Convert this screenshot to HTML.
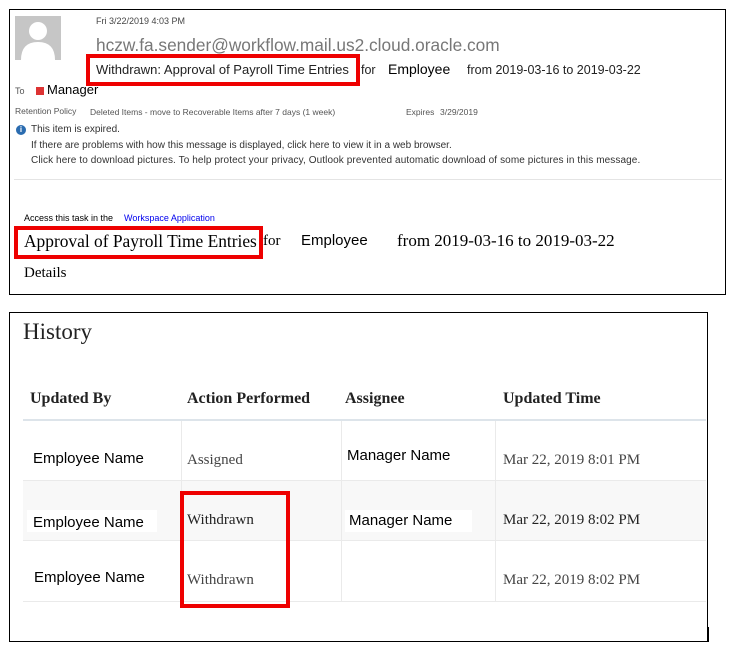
<!DOCTYPE html>
<html><head><meta charset="utf-8"><style>
body{margin:0;width:737px;height:651px;background:#fff;position:relative;overflow:hidden;font-family:"Liberation Sans",sans-serif}
.a{position:absolute;white-space:nowrap}
.s{font-family:"Liberation Serif",serif}
.red{position:absolute;border:4px solid #e00;box-sizing:border-box}
</style></head><body>
<div class="a" style="left:9px;top:9px;width:715px;height:284px;border:1px solid #000"></div>
<div class="a" style="left:15px;top:16px;width:46px;height:44px;background:#c6c6c6;overflow:hidden">
<svg width="46" height="44"><circle cx="23" cy="15" r="9" fill="#fff"/><path d="M6 44 Q6 26 23 26 Q40 26 40 44Z" fill="#fff"/></svg></div>
<div class="a" style="left:96px;top:16px;font-size:9px;color:#444">Fri 3/22/2019 4:03 PM</div>
<div class="a" style="left:96px;top:35px;font-size:17.3px;color:#777">hczw.fa.sender@workflow.mail.us2.cloud.oracle.com</div>
<div class="a" style="left:96px;top:62px;font-size:13px;color:#222">Withdrawn: Approval of Payroll Time Entries</div>
<div class="a" style="left:361px;top:63px;font-size:12.5px;color:#222">for</div>
<div class="a" style="left:388px;top:61px;font-size:14px;color:#000">Employee</div>
<div class="a" style="left:467px;top:63px;font-size:12.5px;color:#222">from 2019-03-16 to 2019-03-22</div>
<div class="red" style="left:86px;top:54px;width:274px;height:32px"></div>
<div class="a" style="left:15px;top:86px;font-size:9px;color:#555">To</div>
<div class="a" style="left:36px;top:87px;width:8px;height:8px;background:#d33"></div>
<div class="a" style="left:47px;top:82px;font-size:13px;color:#000">Manager</div>
<div class="a" style="left:15px;top:106px;font-size:8.5px;color:#555">Retention Policy</div>
<div class="a" style="left:90px;top:107px;font-size:8.5px;color:#555">Deleted Items - move to Recoverable Items after 7 days (1 week)</div>
<div class="a" style="left:406px;top:107px;font-size:8.5px;color:#555">Expires</div>
<div class="a" style="left:440px;top:107px;font-size:8.5px;color:#555">3/29/2019</div>
<div class="a" style="left:16px;top:125px;width:10px;height:10px;border-radius:50%;background:#2b6cb0;color:#fff;font-size:8px;text-align:center;line-height:10px;font-weight:bold">i</div>
<div class="a" style="left:31px;top:124px;font-size:10px;color:#333">This item is expired.</div>
<div class="a" style="left:31px;top:140px;font-size:10px;color:#333">If there are problems with how this message is displayed, click here to view it in a web browser.</div>
<div class="a" style="left:31px;top:155px;font-size:10px;color:#333;letter-spacing:0.1px">Click here to download pictures. To help protect your privacy, Outlook prevented automatic download of some pictures in this message.</div>
<div class="a" style="left:14px;top:179px;width:708px;height:1px;background:#e4e4e4"></div>
<div class="a" style="left:24px;top:213px;font-size:9px;color:#000">Access this task in the</div>
<div class="a" style="left:124px;top:213px;font-size:9px;color:#00e">Workspace Application</div>
<div class="a s" style="left:24px;top:231px;font-size:17.4px">Approval of Payroll Time Entries</div>
<div class="a s" style="left:263px;top:233px;font-size:15px">for</div>
<div class="a" style="left:301px;top:232px;font-size:15px">Employee</div>
<div class="a s" style="left:397px;top:231px;font-size:17px">from 2019-03-16 to 2019-03-22</div>
<div class="red" style="left:14px;top:226px;width:249px;height:33px"></div>
<div class="a s" style="left:24px;top:265px;font-size:15px">Details</div>

<div class="a" style="left:9px;top:312px;width:697px;height:328px;border:1px solid #000"></div>
<div class="a" style="left:708px;top:627px;width:1px;height:15px;background:#000"></div>
<div class="a s" style="left:23px;top:319px;font-size:23px;color:#222">History</div>
<div class="a s" style="left:30px;top:390px;font-size:16px;font-weight:bold;color:#222">Updated By</div>
<div class="a s" style="left:187px;top:390px;font-size:16px;font-weight:bold;color:#222">Action Performed</div>
<div class="a s" style="left:345px;top:390px;font-size:16px;font-weight:bold;color:#222">Assignee</div>
<div class="a s" style="left:503px;top:390px;font-size:16px;font-weight:bold;color:#222">Updated Time</div>
<div class="a" style="left:23px;top:419px;width:683px;height:2px;background:#dde4ea"></div>
<div class="a" style="left:23px;top:481px;width:683px;height:60px;background:#f8f8f8"></div>
<div class="a" style="left:23px;top:480px;width:683px;height:1px;background:#eaeaea"></div>
<div class="a" style="left:23px;top:540px;width:683px;height:1px;background:#eaeaea"></div>
<div class="a" style="left:23px;top:601px;width:683px;height:1px;background:#eaeaea"></div>
<div class="a" style="left:181px;top:421px;width:1px;height:180px;background:#eaeaea"></div>
<div class="a" style="left:341px;top:421px;width:1px;height:180px;background:#eaeaea"></div>
<div class="a" style="left:495px;top:421px;width:1px;height:180px;background:#eaeaea"></div>
<div class="a" style="left:27px;top:510px;width:130px;height:22px;background:#fff"></div>
<div class="a" style="left:345px;top:510px;width:127px;height:22px;background:#fff"></div>
<div class="a" style="left:33px;top:450px;font-size:15px">Employee Name</div>
<div class="a" style="left:33px;top:514px;font-size:15px">Employee Name</div>
<div class="a" style="left:34px;top:569px;font-size:15px">Employee Name</div>
<div class="a s" style="left:187px;top:452px;font-size:15px;color:#444">Assigned</div>
<div class="a s" style="left:187px;top:512px;font-size:15px;color:#222">Withdrawn</div>
<div class="a s" style="left:187px;top:572px;font-size:15px;color:#444">Withdrawn</div>
<div class="a" style="left:347px;top:447px;font-size:15px">Manager Name</div>
<div class="a" style="left:349px;top:512px;font-size:15px">Manager Name</div>
<div class="a s" style="left:503px;top:452px;font-size:15px;color:#444">Mar 22, 2019 8:01 PM</div>
<div class="a s" style="left:503px;top:512px;font-size:15px;color:#222">Mar 22, 2019 8:02 PM</div>
<div class="a s" style="left:503px;top:572px;font-size:15px;color:#444">Mar 22, 2019 8:02 PM</div>
<div class="red" style="left:180px;top:491px;width:110px;height:117px"></div>
</body></html>
